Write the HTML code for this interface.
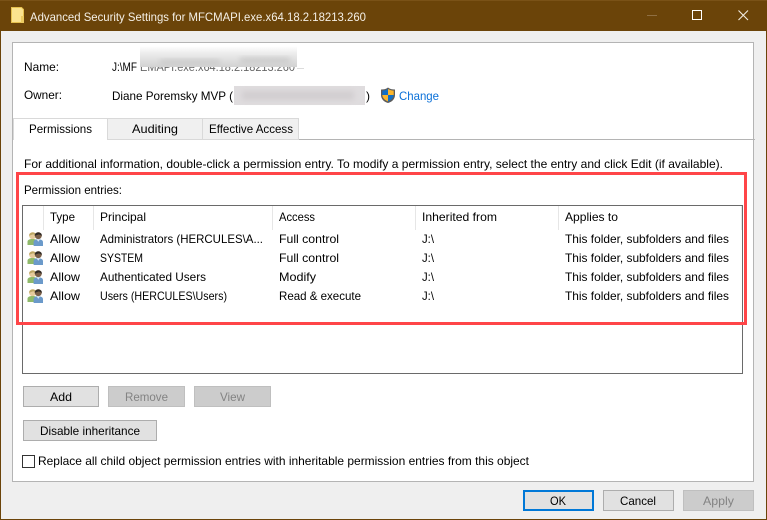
<!DOCTYPE html>
<html><head><meta charset="utf-8"><title>Advanced Security Settings</title>
<style>
html,body{margin:0;padding:0;width:767px;height:520px;overflow:hidden;background:#efefef}
svg{display:block}
text{font-family:"Liberation Sans",sans-serif;font-size:12px;fill:#000}
.g{fill:#838383}
</style></head><body>
<svg width="767" height="520" viewBox="0 0 767 520" xmlns="http://www.w3.org/2000/svg">
<defs>
<filter id="b" x="-10%" y="-60%" width="120%" height="220%"><feGaussianBlur stdDeviation="3"/></filter>
<linearGradient id="nb" x1="0" y1="0" x2="0" y2="1"><stop offset="0" stop-color="#fff"/><stop offset="0.35" stop-color="#ececec"/><stop offset="1" stop-color="#d2d2d2"/></linearGradient>
<g id="u">
<path d="M0.5 14V10.8C0.5 8.6 3 8 5.5 8S10.5 8.6 10.5 10.8V14Z" fill="#8fb96a"/>
<circle cx="5.6" cy="4.6" r="3.5" fill="#e6cb9c"/>
<path d="M2.1 4.8C1.8 0.6 9.4 0.4 9.1 4.4L6.2 3.2Z" fill="#bda765"/>
<path d="M6.6 15V11.2C6.6 8.8 9 8.2 11.2 8.2S16 8.8 16 11.2V15Z" fill="#6b9aca"/>
<circle cx="11.3" cy="4.6" r="3.5" fill="#7a5f48"/>
<path d="M7.8 4.8C7.4 0.4 15.2 0.4 14.8 4.8L12 3.4Z" fill="#2f2a26"/>
<path d="M9.6 8.4H13L11.3 10.8Z" fill="#dbe8f4"/>
</g>
</defs>

<!-- window frame -->
<rect width="767" height="520" fill="#6b4409"/>
<rect x="1" y="31" width="765" height="488" fill="#efefef"/>
<rect x="0" y="0" width="767" height="1" fill="#7a5217"/>

<!-- title -->
<path d="M11.5 7.5H21.5L23.5 9.5V22.5H11.5Z" fill="#fbe38f" stroke="#e6c04e"/>
<rect x="21" y="16" width="3" height="7" fill="#eccb62"/>
<text x="30" y="21" textLength="336" lengthAdjust="spacingAndGlyphs" style="fill:#f4efe6">Advanced Security Settings for MFCMAPI.exe.x64.18.2.18213.260</text>
<rect x="647" y="15" width="10" height="1" fill="#8f6f42"/>
<rect x="692.5" y="10.5" width="9" height="9" fill="none" stroke="#fff"/>
<path d="M738.5 10.5L748 20M748 10.5L738.5 20" stroke="#f2ece2" stroke-width="1.1" fill="none"/>

<!-- main panel -->
<rect x="12.5" y="42.5" width="741" height="439" fill="#fff" stroke="#b4b4b4"/>

<!-- name / owner -->
<text x="24" y="71" textLength="35" lengthAdjust="spacingAndGlyphs">Name:</text>
<text x="112" y="71" textLength="25" lengthAdjust="spacingAndGlyphs">J:\MF</text>
<text x="140" y="71" textLength="155" lengthAdjust="spacingAndGlyphs" style="fill:#666">EMAPI.exe.x64.18.2.18213.260</text>
<rect x="140" y="46" width="157" height="21" fill="url(#nb)"/>
<rect x="160" y="60" width="60" height="4" fill="#c6c6c6" filter="url(#b)"/>
<rect x="240" y="58" width="50" height="5" fill="#c8c8c8" filter="url(#b)"/>
<rect x="297" y="68" width="7" height="1" fill="#dcdcdc"/>
<text x="24" y="99" textLength="38" lengthAdjust="spacingAndGlyphs">Owner:</text>
<text x="112" y="100" textLength="121" lengthAdjust="spacingAndGlyphs">Diane Poremsky MVP (</text>
<rect x="234" y="86" width="131" height="19" fill="#dfdcde"/>
<rect x="242" y="91" width="112" height="9" fill="#d1ced0" filter="url(#b)"/>
<text x="366" y="100" textLength="4" lengthAdjust="spacingAndGlyphs">)</text>

<!-- shield -->
<path d="M388 87.5C390 89 392 89.5 395 89.5V95C395 99 392 102 388 103C384 102 381 99 381 95V89.5C384 89.5 386 89 388 87.5Z" fill="#5c5c5c"/>
<path d="M388 89V95H382.3V90.6C384.6 90.5 386.4 90 388 89Z" fill="#0f6fc6"/>
<path d="M388 89C389.6 90 391.4 90.5 393.7 90.6V95H388Z" fill="#fbb62c"/>
<path d="M382.3 95H388V101.4C385 100.4 382.6 98.2 382.3 95Z" fill="#fbb62c"/>
<path d="M388 95H393.7C393.4 98.2 391 100.4 388 101.4Z" fill="#0f6fc6"/>
<text x="399" y="100" textLength="40" lengthAdjust="spacingAndGlyphs" style="fill:#0a70d8">Change</text>

<!-- tabs -->
<rect x="12" y="139" width="743" height="1" fill="#b4b4b4"/>
<rect x="202.5" y="118.5" width="96" height="21" fill="#f0f0f0" stroke="#d9d9d9"/>
<rect x="107.5" y="118.5" width="95" height="21" fill="#f0f0f0" stroke="#d9d9d9"/>
<path d="M13.5 140V118.5H107.5V140" fill="#fff" stroke="#d9d9d9"/>
<rect x="14" y="138" width="93" height="3" fill="#fff"/>
<text x="29" y="133" textLength="63" lengthAdjust="spacingAndGlyphs">Permissions</text>
<text x="132" y="133" textLength="46" lengthAdjust="spacingAndGlyphs">Auditing</text>
<text x="209" y="133" textLength="84" lengthAdjust="spacingAndGlyphs">Effective Access</text>

<text x="24" y="168" textLength="699" lengthAdjust="spacingAndGlyphs">For additional information, double-click a permission entry. To modify a permission entry, select the entry and click Edit (if available).</text>
<text x="24" y="194" textLength="98" lengthAdjust="spacingAndGlyphs">Permission entries:</text>

<!-- list -->
<rect x="22.5" y="205.5" width="720" height="168" fill="#fff" stroke="#6a6a6a"/>
<g fill="#e6e6e6">
<rect x="43" y="206" width="1" height="24"/><rect x="93" y="206" width="1" height="24"/>
<rect x="272" y="206" width="1" height="24"/><rect x="415" y="206" width="1" height="24"/>
<rect x="558" y="206" width="1" height="24"/><rect x="741" y="206" width="1" height="24"/>
</g>
<text x="50" y="221" textLength="25" lengthAdjust="spacingAndGlyphs">Type</text>
<text x="100" y="221" textLength="46" lengthAdjust="spacingAndGlyphs">Principal</text>
<text x="279" y="221" textLength="36" lengthAdjust="spacingAndGlyphs">Access</text>
<text x="422" y="221" textLength="75" lengthAdjust="spacingAndGlyphs">Inherited from</text>
<text x="565" y="221" textLength="53" lengthAdjust="spacingAndGlyphs">Applies to</text>

<use href="#u" x="27" y="231"/>
<text x="50" y="243" textLength="30" lengthAdjust="spacingAndGlyphs">Allow</text>
<text x="100" y="243" textLength="163" lengthAdjust="spacingAndGlyphs">Administrators (HERCULES\A...</text>
<text x="279" y="243" textLength="60" lengthAdjust="spacingAndGlyphs">Full control</text>
<text x="422" y="243" textLength="12" lengthAdjust="spacingAndGlyphs">J:\</text>
<text x="565" y="243" textLength="164" lengthAdjust="spacingAndGlyphs">This folder, subfolders and files</text>

<use href="#u" x="27" y="250"/>
<text x="50" y="262" textLength="30" lengthAdjust="spacingAndGlyphs">Allow</text>
<text x="100" y="262" textLength="43" lengthAdjust="spacingAndGlyphs">SYSTEM</text>
<text x="279" y="262" textLength="60" lengthAdjust="spacingAndGlyphs">Full control</text>
<text x="422" y="262" textLength="12" lengthAdjust="spacingAndGlyphs">J:\</text>
<text x="565" y="262" textLength="164" lengthAdjust="spacingAndGlyphs">This folder, subfolders and files</text>

<use href="#u" x="27" y="269"/>
<text x="50" y="281" textLength="30" lengthAdjust="spacingAndGlyphs">Allow</text>
<text x="100" y="281" textLength="106" lengthAdjust="spacingAndGlyphs">Authenticated Users</text>
<text x="279" y="281" textLength="37" lengthAdjust="spacingAndGlyphs">Modify</text>
<text x="422" y="281" textLength="12" lengthAdjust="spacingAndGlyphs">J:\</text>
<text x="565" y="281" textLength="164" lengthAdjust="spacingAndGlyphs">This folder, subfolders and files</text>

<use href="#u" x="27" y="288"/>
<text x="50" y="300" textLength="30" lengthAdjust="spacingAndGlyphs">Allow</text>
<text x="100" y="300" textLength="127" lengthAdjust="spacingAndGlyphs">Users (HERCULES\Users)</text>
<text x="279" y="300" textLength="82" lengthAdjust="spacingAndGlyphs">Read &amp; execute</text>
<text x="422" y="300" textLength="12" lengthAdjust="spacingAndGlyphs">J:\</text>
<text x="565" y="300" textLength="164" lengthAdjust="spacingAndGlyphs">This folder, subfolders and files</text>

<!-- red annotation -->
<rect x="17.5" y="173.5" width="728" height="150" fill="none" stroke="#ff4548" stroke-width="3"/>

<!-- buttons -->
<rect x="23.5" y="386.5" width="75" height="20" fill="#e1e1e1" stroke="#adadad"/>
<text x="50" y="401" textLength="22" lengthAdjust="spacingAndGlyphs">Add</text>
<rect x="108.5" y="386.5" width="76" height="20" fill="#cccccc" stroke="#bfbfbf"/>
<text x="125" y="401" textLength="43" lengthAdjust="spacingAndGlyphs" class="g">Remove</text>
<rect x="194.5" y="386.5" width="76" height="20" fill="#cccccc" stroke="#bfbfbf"/>
<text x="220" y="401" textLength="25" lengthAdjust="spacingAndGlyphs" class="g">View</text>
<rect x="23.5" y="420.5" width="133" height="20" fill="#e1e1e1" stroke="#adadad"/>
<text x="40" y="435" textLength="100" lengthAdjust="spacingAndGlyphs">Disable inheritance</text>
<rect x="22.5" y="455.5" width="12" height="12" fill="#fff" stroke="#333"/>
<text x="38" y="465" textLength="491" lengthAdjust="spacingAndGlyphs">Replace all child object permission entries with inheritable permission entries from this object</text>

<rect x="524" y="491" width="69" height="19" fill="#e1e1e1" stroke="#0078d7" stroke-width="2"/>
<text x="550" y="505" textLength="16" lengthAdjust="spacingAndGlyphs">OK</text>
<rect x="603.5" y="490.5" width="70" height="20" fill="#e1e1e1" stroke="#adadad"/>
<text x="620" y="505" textLength="36" lengthAdjust="spacingAndGlyphs">Cancel</text>
<rect x="683.5" y="490.5" width="70" height="20" fill="#cccccc" stroke="#bfbfbf"/>
<text x="703" y="505" textLength="31" lengthAdjust="spacingAndGlyphs" class="g">Apply</text>
</svg>
</body></html>
